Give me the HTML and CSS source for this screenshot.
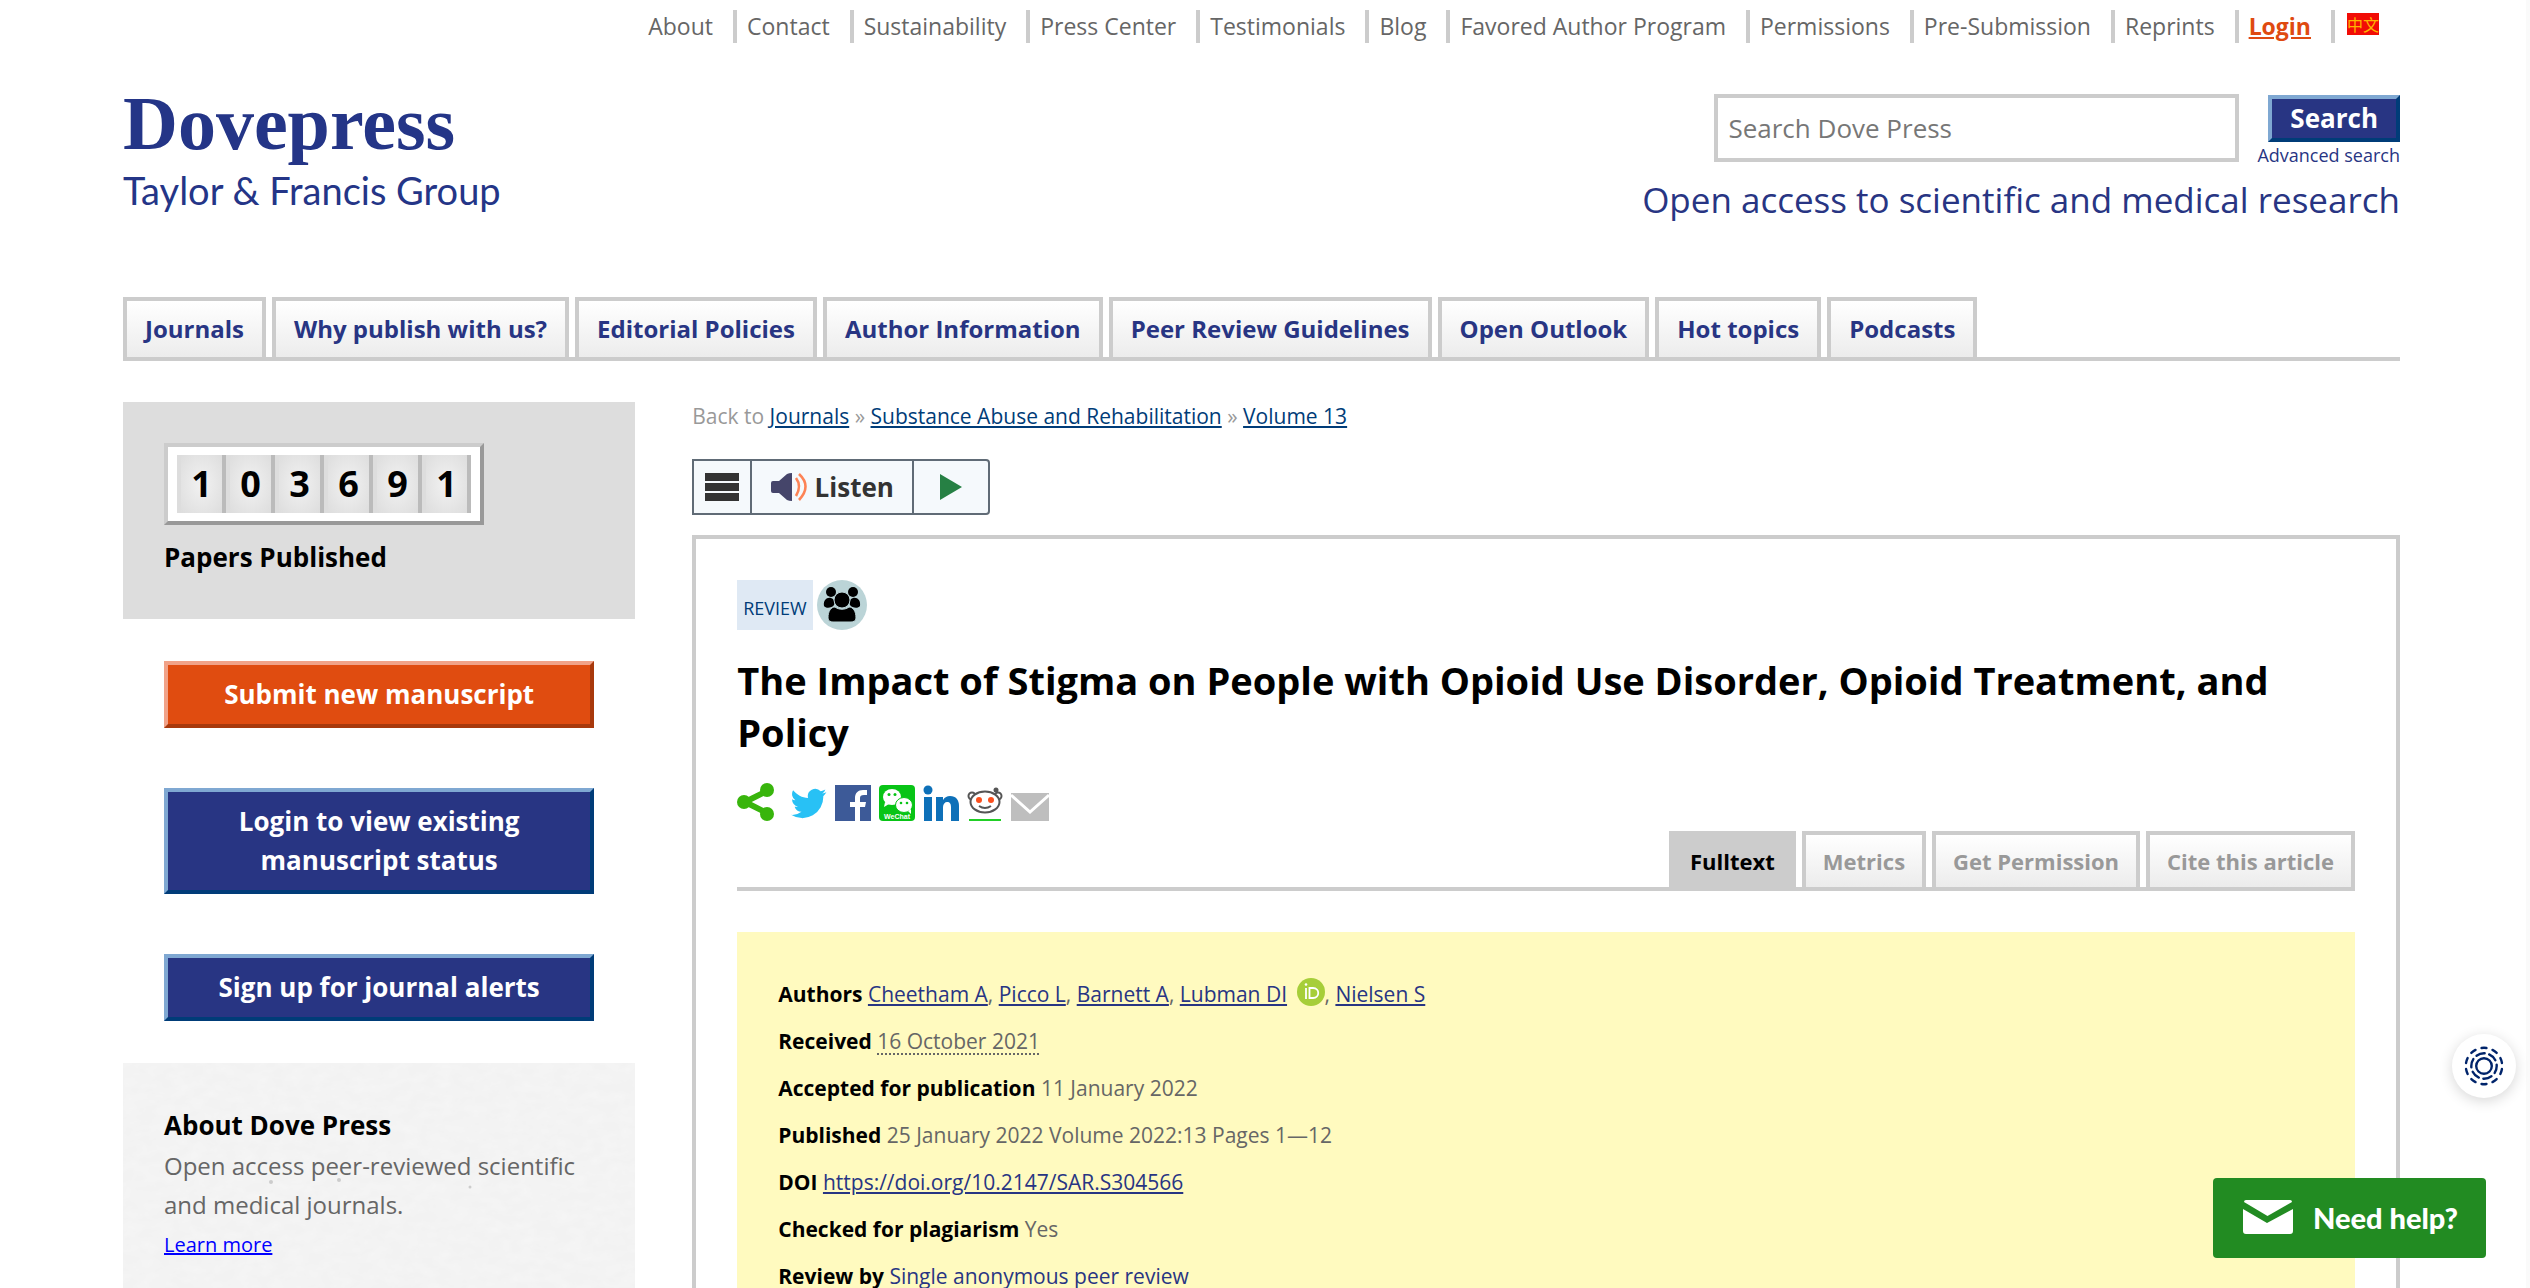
FILE: index.html
```html
<!DOCTYPE html>
<html lang="en">
<head>
<meta charset="utf-8">
<title>The Impact of Stigma on People with Opioid Use Disorder | SAR</title>
<link rel="stylesheet" href="styles.css">
</head>
<body>
<header class="site-header">
  <nav class="top-links" aria-label="Site">
    <a href="#">About</a>
    <a href="#">Contact</a>
    <a href="#">Sustainability</a>
    <a href="#">Press Center</a>
    <a href="#">Testimonials</a>
    <a href="#">Blog</a>
    <a href="#">Favored Author Program</a>
    <a href="#">Permissions</a>
    <a href="#">Pre-Submission</a>
    <a href="#">Reprints</a>
    <a href="#" class="login">Login</a>
    <a href="#" class="language"><span class="flag" lang="zh">中文</span></a>
  </nav>
  <div class="masthead">
    <a href="#" class="logo">
      <span class="logo-name">Dovepress</span>
      <span class="logo-group">Taylor &amp; Francis Group</span>
    </a>
    <div class="search-area">
      <form class="search">
        <input type="search" class="search-box" placeholder="Search Dove Press" aria-label="Search Dove Press">
        <div class="search-actions">
          <button type="button" class="search-button">Search</button>
          <a href="#" class="advanced">Advanced search</a>
        </div>
      </form>
      <p class="tagline">Open access to scientific and medical research</p>
    </div>
  </div>
  <nav class="tabs main-tabs" aria-label="Main">
    <a href="#">Journals</a>
    <a href="#">Why publish with us?</a>
    <a href="#">Editorial Policies</a>
    <a href="#">Author Information</a>
    <a href="#">Peer Review Guidelines</a>
    <a href="#">Open Outlook</a>
    <a href="#">Hot topics</a>
    <a href="#">Podcasts</a>
  </nav>
</header>

<div class="columns">
  <aside class="sidebar">
    <section class="counter-panel">
      <div class="counter"><span>1</span><span>0</span><span>3</span><span>6</span><span>9</span><span>1</span></div>
      <p class="counter-label">Papers Published</p>
    </section>
    <div class="actions">
      <button type="button" class="action submit">Submit new manuscript</button>
      <button type="button" class="action">Login to view existing manuscript status</button>
      <button type="button" class="action">Sign up for journal alerts</button>
    </div>
    <section class="about-panel">
      <h2>About Dove Press</h2>
      <p>Open access peer-reviewed scientific and medical journals.</p>
      <a href="#">Learn more</a>
    </section>
  </aside>

  <main class="main">
    <p class="breadcrumb">Back to <a href="#">Journals</a> » <a href="#">Substance Abuse and Rehabilitation</a> » <a href="#">Volume 13</a></p>
    <div class="listen">
      <button type="button" class="listen-menu" aria-label="Menu">
        <svg width="34" height="28" viewBox="0 0 34 28"><path fill="#333" d="M0 0h34v8H0zM0 10h34v8H0zM0 20h34v8H0z"/></svg>
      </button>
      <button type="button" class="listen-main">
        <svg width="36" height="28" viewBox="0 0 36 28"><path fill="#45456a" d="M2 8h6l8-7q2-1 5-1v28q-3 0-5-1l-8-7H2q-2 0-2-2v-8q0-2 2-2z"/><path fill="none" stroke="#fd8355" stroke-width="2.6" d="M25 5q6 8 0 18M28 1q13 12 0 26"/></svg>
        Listen
      </button>
      <button type="button" class="listen-play" aria-label="Play">
        <svg width="22" height="26" viewBox="0 0 22 26"><path fill="#268044" d="M0 0l22 13L0 26z"/></svg>
      </button>
    </div>

    <article class="article">
      <div class="badges">
        <span class="kind">REVIEW</span>
        <svg width="50" height="50" viewBox="0 0 50 50" aria-label="Peer reviewed">
          <circle cx="25" cy="25" r="25" fill="#bbd4d7"/>
          <circle cx="14" cy="12" r="5"/><circle cx="36" cy="12" r="5"/>
          <path d="M7 26c-1-6 3-9 7-8 3 1 4 4 3 7-2 3-8 4-10 1zM43 26c1-6-3-9-7-8-3 1-4 4-3 7 2 3 8 4 10 1z"/>
          <circle cx="25" cy="20" r="8" stroke="#bbd4d7"/>
          <path stroke="#bbd4d7" d="M11 38c0-7 3-11 7-11 4 3 10 3 14 0 4 0 7 4 7 11 0 3-3 4-5 4H16c-2 0-5-1-5-4z"/>
        </svg>
      </div>
      <h1>The Impact of Stigma on People with Opioid Use Disorder, Opioid Treatment, and Policy</h1>
      <div class="share">
        <svg class="share-mark" width="38" height="38" viewBox="0 0 38 38"><path fill="none" stroke="#38b50c" stroke-width="6" d="M30 8L8 19l22 11"/><g fill="#38b50c"><circle cx="30" cy="7" r="7"/><circle cx="7" cy="19" r="7"/><circle cx="30" cy="31" r="7"/></g></svg>
        <a href="#" aria-label="Twitter"><svg width="36" height="36" viewBox="0 0 24 24"><path fill="#28c1f5" d="M23.6 4.9a9.700 9.700 0 0 1-2.800.8 4.900 4.900 0 0 0 2.100-2.700c-.9.6-2 1-3.100 1.200a4.900 4.900 0 0 0-8.400 4.500C7.400 8.500 3.800 6.500 1.400 3.500a4.900 4.900 0 0 0 1.500 6.600c-.8 0-1.600-.2-2.200-.6a4.900 4.900 0 0 0 3.900 4.900c-.7.2-1.500.2-2.200.1.6 2 2.400 3.400 4.600 3.400A9.900 9.900 0 0 1 0 19.900a14 14 0 0 0 21.500-12.400c.8-.7 1.600-1.600 2.100-2.600z"/></svg></a>
        <a href="#" aria-label="Facebook"><svg width="36" height="36" viewBox="0 0 36 36"><path fill="#3d5a98" d="M0 0h36v36H0z"/><path fill="#fff" d="M20 36V22h-5v-5h5v-4c0-5 3-8 8-8h4v5h-3c-3 0-4 1-4 3v4h6l-1 5h-5v14z"/></svg></a>
        <a href="#" aria-label="WeChat"><svg width="36" height="36" viewBox="0 0 36 36"><rect width="36" height="36" rx="4" fill="#08c416"/><g fill="#fff"><ellipse cx="13" cy="12" rx="9" ry="8"/><path d="M6 17l-1 5 5-3z"/><ellipse cx="25" cy="20" rx="8.500" ry="7.500" stroke="#08c416"/><path d="M29 26l3 3v-5z"/></g><g fill="#08c416"><circle cx="10" cy="9.500" r="1.500"/><circle cx="16" cy="9.500" r="1.500"/><circle cx="22" cy="18" r="1.300"/><circle cx="28" cy="18" r="1.300"/></g><text x="18" y="34" text-anchor="middle" class="wechat-name">WeChat</text></svg></a>
        <a href="#" aria-label="LinkedIn"><svg width="36" height="36" viewBox="0 0 36 36"><g fill="#0e70b8"><circle cx="5" cy="5" r="4.500"/><path d="M1 12h8v24H1zM13 12h7v3c2-3 4-4 7-4 6 0 9 4 9 10v15h-8V22c0-3-1-5-4-5-2 0-4 2-4 5v14h-7z"/></g></svg></a>
        <a href="#" aria-label="Reddit"><svg width="36" height="36" viewBox="0 0 36 36"><g fill="#fff" stroke="#555" stroke-width="2"><circle cx="5" cy="11" r="3.500"/><circle cx="31" cy="11" r="3.500"/><ellipse cx="18" cy="17" rx="14.500" ry="10.500"/><path fill="none" d="M12 21q6 4 12 0"/></g><circle cx="29" cy="5" r="2.500" fill="#555"/><circle cx="12" cy="15" r="3" fill="#fb4f1d"/><circle cx="24" cy="15" r="3" fill="#fb4f1d"/><path fill="#21cf26" d="M2 34h32v2H2z"/></svg></a>
        <a href="#" aria-label="Email"><svg width="38" height="28" viewBox="0 0 38 28"><path fill="#bebebe" d="M0 0h38v28H0z"/><path fill="none" stroke="#fff" stroke-width="3" d="M0 2l19 17L38 2"/></svg></a>
      </div>
      <nav class="tabs article-tabs" aria-label="Article">
        <a href="#" class="active">Fulltext</a>
        <a href="#">Metrics</a>
        <a href="#">Get Permission</a>
        <a href="#">Cite this article</a>
      </nav>
      <section class="facts">
        <p><b>Authors</b> <a href="#">Cheetham A</a>, <a href="#">Picco L</a>, <a href="#">Barnett A</a>, <a href="#">Lubman DI</a> <svg class="orcid" width="28" height="28" viewBox="0 0 28 28" aria-label="ORCID"><circle cx="14" cy="14" r="14" fill="#a6ce39"/><g fill="none" stroke="#fff" stroke-width="1.800"><path d="M9 10v11M12.500 10v10h3.500c7 0 7-10 0-10z"/></g><circle cx="9" cy="6.500" r="1.300" fill="#fff"/></svg>, <a href="#">Nielsen S</a></p>
        <p><b>Received</b> <span class="dotted">16 October 2021</span></p>
        <p><b>Accepted for publication</b> 11 January 2022</p>
        <p><b>Published</b> 25 January 2022 Volume 2022:13 Pages 1—12</p>
        <p><b>DOI</b> <a href="#">https://doi.org/10.2147/SAR.S304566</a></p>
        <p><b>Checked for plagiarism</b> Yes</p>
        <p><b>Review by</b> <a href="#" class="plain">Single anonymous peer review</a></p>
      </section>
    </article>
  </main>
</div>

<button type="button" class="cookie" aria-label="Cookie settings">
  <svg width="40" height="40" viewBox="-20 -20 40 40"><g fill="none" stroke="#00246b" stroke-width="2.400" stroke-linecap="round"><circle r="7.800"/><circle r="12.700" pathLength="60" stroke-dasharray="6.500 3.500" stroke-dashoffset="1"/><circle r="18.200" pathLength="100" stroke-dasharray="4.500 5.500" stroke-dashoffset="27.250"/></g></svg>
</button>
<button type="button" class="help">
  <svg width="50" height="34" viewBox="0 0 50 34"><path fill="#fff" d="M3 0h44q2 0 2 2L24.500 16 1 2q0-2 2-2zM0 9l24 14L50 9v22q0 3-3 3H3q-3 0-3-3z"/></svg>
  Need help?
</button>
</body>
</html>
```
FILE: styles.css
```css
* { box-sizing: border-box; }
html { background: #fff; }
body {
  margin: 0;
  height: 100vh;
  overflow: hidden;
  border-right: 4px solid #fafafa;
  padding: 0 126px 0 123px;
  font-family: "Open Sans", sans-serif;
  font-size: 21px;
  line-height: 31px;
  color: #666;
}
h1, h2, p { margin: 0; }
button { font-family: inherit; margin: 0; cursor: pointer; }
svg { display: block; flex: none; }

/* Top links */
.top-links {
  display: flex;
  justify-content: flex-end;
  padding: 10px 21px 0 0;
}
.top-links a {
  height: 33px;
  line-height: 33px;
  padding: 0 20px 0 10px;
  border-right: 4px solid #ccc;
  font-size: 23px;
  color: #666;
  text-decoration: none;
  white-space: nowrap;
}
.top-links .login { color: #df4a10; font-weight: 700; text-decoration: underline; }
.top-links .language { border: 0; padding: 3px 0 0 12px; }
.flag {
  display: block;
  width: 32px;
  height: 22px;
  line-height: 22px;
  background: #f10c06;
  color: #ffb400;
  font-family: "Noto Sans CJK SC", sans-serif;
  font-size: 16px;
}

/* Masthead */
.masthead {
  display: flex;
  justify-content: space-between;
  height: 254px;
  padding-top: 51px;
}
.logo { display: flex; flex-direction: column; color: #243587; text-decoration: none; }
.logo-name {
  font-family: "Liberation Serif", serif;
  font-weight: 700;
  font-size: 76px;
  line-height: 58px;
}
.logo-group { font-family: Lato, sans-serif; font-size: 38px; line-height: 76px; }
.search { display: flex; justify-content: flex-end; gap: 18px; }
.search-box {
  width: 525px;
  height: 68px;
  border: 4px solid #ccc;
  border-radius: 0;
  padding: 0 10px;
  font-family: inherit;
  font-size: 26px;
  outline: 0;
}
.search-box::placeholder { color: #777; }
.search-actions { display: flex; flex-direction: column; align-items: flex-end; padding-top: 1px; }
.search-button, .action {
  background: #283583;
  border: 4px solid;
  border-color: #7fa8d2 #003c78 #003c78 #7fa8d2;
  color: #fff;
  font-size: 26px;
  font-weight: 700;
  line-height: 39px;
}
.search-button { padding: 0 18px; }
.advanced { font-size: 18px; line-height: 27px; color: #283583; text-decoration: none; }
.tagline {
  font-size: 35px;
  line-height: 48px;
  text-align: right;
  padding-top: 7px;
  color: #283583;
}

/* Tab bars */
.tabs { display: flex; gap: 6px; border-bottom: 4px solid #ccc; }
.tabs a {
  border: 4px solid #ccc;
  border-bottom: 0;
  background: linear-gradient(#fff, #ececec);
  font-weight: 700;
  text-decoration: none;
  white-space: nowrap;
}
.main-tabs a { padding: 0 18px; font-size: 24px; line-height: 56px; color: #283583; }
.article-tabs { justify-content: flex-end; margin-top: 10px; }
.article-tabs a { padding: 0 17px; font-size: 22px; line-height: 52px; color: #999; }
.article-tabs .active { background: #ccc; color: #000; }

/* Columns */
.columns {
  display: grid;
  grid-template-columns: 22.5% 75%;
  justify-content: space-between;
  align-items: start;
  padding-top: 41px;
}
.counter-panel { background: #ddd; padding: 41px 41px 42px; }
.counter {
  display: inline-flex;
  background: #fff;
  border: 4px solid;
  border-color: #ccc #999 #999 #ccc;
  padding: 8px 9px;
  vertical-align: top;
}
.counter span {
  width: 49px;
  height: 58px;
  line-height: 58px;
  border: solid;
  border-width: 0 4px;
  border-color: #ddd #bbb #ddd #ddd;
  background: radial-gradient(#f2f2f2, #ddd);
  color: #000;
  font-size: 36px;
  font-weight: 700;
  text-align: center;
}
.counter-label { padding-top: 13px; font-size: 26px; line-height: 39px; font-weight: 700; color: #000; }
.actions {
  display: flex;
  flex-direction: column;
  gap: 60px;
  padding: 42px 41px;
}
.action { padding: 10px 40px; }
.submit { background: #e04c10; border-color: #f1a288 #a8390c #a8390c #f1a288; }
.about-panel {
  padding: 41px;
  min-height: 300px;
  background: #f2f2f2 url("data:image/svg+xml,%3Csvg xmlns='http://www.w3.org/2000/svg' width='512' height='300'%3E%3Cfilter id='n' x='0' y='0' width='100%25' height='100%25'%3E%3CfeTurbulence type='fractalNoise' baseFrequency='.06 .1' numOctaves='3' stitchTiles='stitch'/%3E%3CfeColorMatrix values='0 0 0 0 1 0 0 0 0 1 0 0 0 0 1 1.500 0 0 0 -.5'/%3E%3C/filter%3E%3Crect width='512' height='300' filter='url(%23n)' opacity='.3'/%3E%3Cg fill='%23ccc'%3E%3Ccircle cx='148' cy='119' r='2'/%3E%3Ccircle cx='216' cy='117' r='2'/%3E%3Ccircle cx='347' cy='124' r='1.500'/%3E%3C/g%3E%3C/svg%3E");
}
.about-panel h2 { font-size: 26px; line-height: 42px; color: #000; }
.about-panel p { font-size: 24px; line-height: 39px; }
.about-panel a { font-size: 20px; line-height: 42px; color: #00f; }

/* Main column */
.breadcrumb { line-height: 29px; color: #999; }
.breadcrumb a { color: #003c78; }
.listen { display: flex; width: max-content; margin: 28px 0 20px; }
.listen button {
  display: flex;
  align-items: center;
  justify-content: center;
  height: 56px;
  padding: 0;
  border: 2px solid #606b76;
  border-left-width: 0;
  background: #f5f9fc;
}
.listen .listen-menu { width: 60px; border-left-width: 2px; }
.listen .listen-main { width: 162px; gap: 8px; font-size: 26px; font-weight: 700; color: #333; }
.listen .listen-play { width: 76px; border-radius: 0 4px 4px 0; }
.article { border: 4px solid #ccc; padding: 41px; }
.badges { display: flex; align-items: center; gap: 4px; }
.kind {
  padding: 7px 6px 0;
  height: 50px;
  line-height: 42px;
  background: #dfe9f4;
  font-size: 18px;
  color: #003c78;
}
h1 { padding-top: 24px; font-size: 38px; line-height: 52px; color: #000; }
.share { display: flex; align-items: flex-end; gap: 8px; padding-top: 25px; }
.share-mark { margin-right: 8px; }
.wechat-name { font: 700 7px "Liberation Sans", sans-serif; fill: #fff; }
.facts { margin-top: 41px; padding: 39px 41px; background: #fffabf; }
.facts p { line-height: 47px; }
.facts b { color: #000; }
.facts a { color: #283583; }
.facts .plain { text-decoration: none; }
.dotted { text-decoration: underline dotted; text-underline-offset: 4px; }
.orcid { display: inline-block; margin-left: 4px; vertical-align: -4px; }

/* Floating controls */
.cookie {
  position: fixed;
  right: 14px;
  bottom: 190px;
  width: 64px;
  height: 64px;
  display: grid;
  place-items: center;
  padding: 0;
  border: 0;
  border-radius: 50%;
  background: #fff;
  box-shadow: 0 3px 14px rgba(0, 0, 0, .16);
}
.help {
  position: fixed;
  right: 44px;
  bottom: 30px;
  height: 80px;
  display: flex;
  align-items: center;
  gap: 20px;
  padding: 0 28px 2px 30px;
  border: 0;
  border-radius: 4px;
  background: #228b22;
  color: #fff;
  font-family: Lato, sans-serif;
  font-size: 29px;
  font-weight: 900;
}
```
